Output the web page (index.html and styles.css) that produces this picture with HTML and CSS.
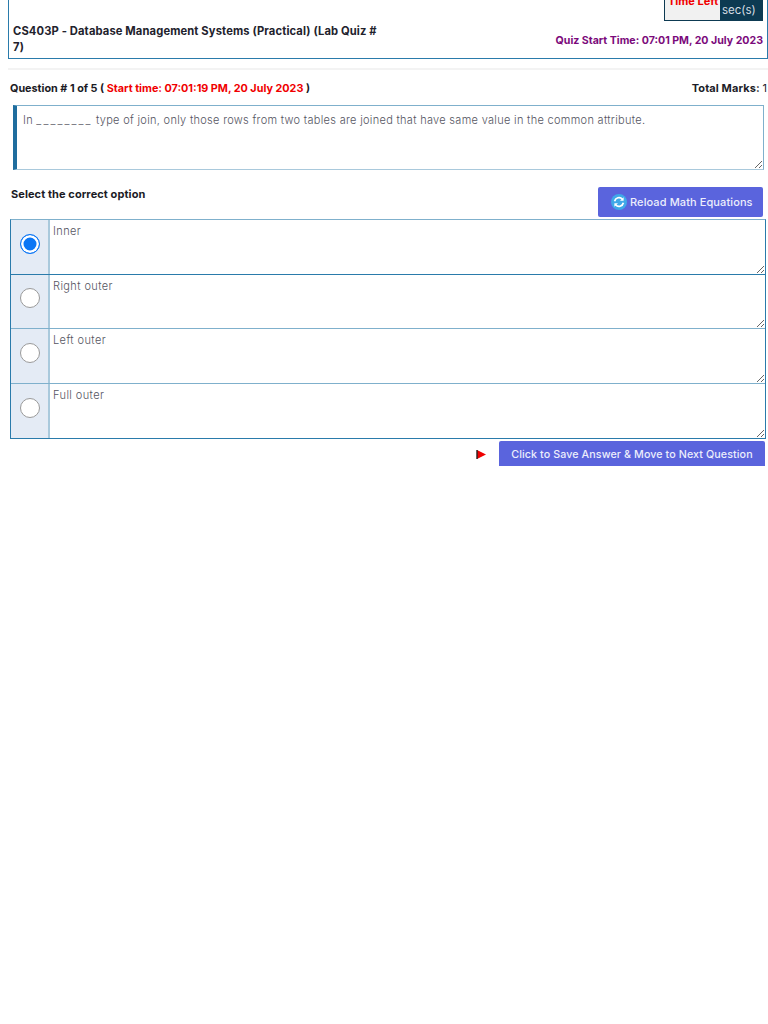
FILE: index.html
```html
<!DOCTYPE html>
<html lang="en">
<head>
<meta charset="utf-8">
<title>Lab Quiz</title>
<link rel="stylesheet" href="styles.css">
</head>
<body>
<div class="page">
  <header class="head">
    <div class="course">CS403P - Database Management Systems (Practical) (Lab Quiz # 7)</div>
    <div class="head-right">
      <div class="timer"><div class="timer-label">Time Left</div><div class="timer-unit">sec(s)</div></div>
      <div class="quiz-start">Quiz Start Time: 07:01 PM, 20 July 2023</div>
    </div>
  </header>
  <div class="rule"></div>
  <div class="q-row">
    <div class="q-title">Question # 1 of 5 ( <span class="red">Start time: 07:01:19 PM, 20 July 2023</span> )</div>
    <div class="marks">Total Marks: <span class="marks-val">1</span></div>
  </div>
  <div class="question">In <span class="blank">________</span> type of join, only those rows from two tables are joined that have same value in the common attribute.</div>
  <div class="select-row">
    <div class="select-label">Select the correct option</div>
    <button class="btn reload" type="button">
      <svg class="reload-icon" viewBox="0 0 16 16" width="16" height="16" aria-hidden="true">
        <circle cx="8" cy="8" r="8" fill="#3fa9e8"/>
        <path d="M3.6 7.2A4.5 4.5 0 0 1 11.4 5.2" fill="none" stroke="#fff" stroke-width="1.7"/>
        <path d="M12.6 3.2v3.6H9z" fill="#fff"/>
        <path d="M12.4 8.8A4.5 4.5 0 0 1 4.6 10.8" fill="none" stroke="#fff" stroke-width="1.7"/>
        <path d="M3.4 12.8V9.2H7z" fill="#fff"/>
      </svg>
      Reload Math Equations
    </button>
  </div>
  <div class="options">
    <div class="option">
      <div class="radio-cell"><span class="radio checked"></span></div>
      <textarea class="answer" readonly>Inner</textarea>
    </div>
    <div class="option">
      <div class="radio-cell"><span class="radio"></span></div>
      <textarea class="answer" readonly>Right outer</textarea>
    </div>
    <div class="option">
      <div class="radio-cell"><span class="radio"></span></div>
      <textarea class="answer" readonly>Left outer</textarea>
    </div>
    <div class="option">
      <div class="radio-cell"><span class="radio"></span></div>
      <textarea class="answer" readonly>Full outer</textarea>
    </div>
  </div>
  <div class="save-row">
    <svg class="arrow" viewBox="0 0 11 11" width="11" height="11" aria-hidden="true">
      <path d="M1 1l9 4.5-9 4.5z" fill="#f00000"/>
      <path d="M1 1v9" stroke="#222" stroke-width="1.4"/>
    </svg>
    <button class="btn save" type="button">Click to Save Answer &amp; Move to Next Question</button>
  </div>
</div>
</body>
</html>
```
FILE: styles.css
```css
* { box-sizing: border-box; }
html, body { margin: 0; background: #fff; }
body {
  font-family: "Inter", "Open Sans", "Liberation Sans", sans-serif;
  color: #1d1d28;
  font-size: 11px;
}
.page { height: 1024px; overflow: hidden; }

.head {
  margin-left: 8px;
  height: 59px;
  border: 1px solid #2a7bab;
  border-top: 0;
  display: flex;
  justify-content: space-between;
  align-items: flex-end;
  padding: 0 4px 3px 4px;
  overflow: hidden;
}
.course {
  width: 368px;
  font-weight: 700;
  font-size: 11.2px;
  line-height: 16px;
  letter-spacing: 0.12px;
  color: #22222c;
}
.head-right {
  align-self: flex-start;
  display: flex;
  flex-direction: column;
  align-items: flex-end;
  gap: 12px;
}
.timer {
  display: flex;
  width: 99px;
  height: 21px;
  border: 1px solid #0d3a52;
  border-top: 0;
  overflow: hidden;
}
.timer-label {
  width: 55px;
  background: #f1f1f1;
  color: #f00000;
  font-weight: 700;
  font-size: 11px;
  line-height: 2px;
  padding-left: 3px;
  white-space: nowrap;
}
.timer-unit {
  flex: 1;
  background: #0d3a52;
  color: #d5dde2;
  font-size: 11.5px;
  line-height: 20px;
  padding-left: 2px;
}
.quiz-start {
  font-weight: 700;
  font-size: 10.6px;
  line-height: 16px;
  color: #7b0a7b;
  white-space: nowrap;
}

.rule { height: 2px; margin: 9px 0 0 8px; background: #f3f3f3; }

.q-row {
  display: flex;
  justify-content: space-between;
  align-items: center;
  height: 16px;
  margin: 10px 0 0 10px;
  white-space: nowrap;
}
.q-title { font-weight: 700; font-size: 10.8px; color: #1b1b25; }
.red { color: #f00000; }
.marks { font-weight: 700; font-size: 11px; letter-spacing: 0.1px; margin-right: 1px; }
.marks-val { font-weight: 400; }

.question {
  width: 751px;
  height: 65px;
  margin: 9px 0 0 13px;
  padding: 7px 6px;
  border: 1px solid #7fb0cc;
  border-left: 4px solid #1f6d9e;
  border-bottom-color: #a9c9dc;
  font-size: 11px;
  font-weight: 300;
  letter-spacing: 0.3px;
  line-height: 15px;
  color: #55555f;
  background: #fff;
  overflow: auto;
  resize: both;
}
.blank { letter-spacing: 2.1px; }

.select-row {
  display: flex;
  justify-content: space-between;
  margin: 17px 5px 0 11px;
  height: 31px;
}
.select-label { font-weight: 700; font-size: 11px; letter-spacing: 0.08px; line-height: 14px; color: #1b1b25; }

.btn {
  border: 0;
  border-radius: 2px;
  background: #5a64dd;
  color: #eceefc;
  font-family: inherit;
  font-weight: 500;
  font-size: 11px;
  letter-spacing: 0.1px;
  white-space: nowrap;
}
.reload {
  width: 165px;
  height: 30px;
  display: flex;
  align-items: center;
  gap: 3px;
  padding: 0 0 0 13px;
}
.reload-icon { flex: none; }

.options {
  margin: 1px 2px 0 10px;
  border: 1px solid #2a7bab;
  border-top: 1px solid #7fb0cc;
}
.option {
  display: flex;
  height: 54.6px;
  border-bottom: 1px solid #7fb0cc;
}
.option:first-child { border-bottom-color: #2a7bab; }
.option:last-child { border-bottom: 0; }
.radio-cell {
  width: 39px;
  flex: none;
  background: #e4ebf5;
  border-right: 2px solid #a9c9dc;
  display: flex;
  align-items: center;
  justify-content: center;
  padding: 0 0 6px 1px;
}
.radio {
  width: 20px;
  height: 20px;
  border-radius: 50%;
  border: 1px solid #9a9a9a;
  background: #fff;
}
.radio.checked {
  border: 1.5px solid #0b76f5;
  background: #0b76f5;
  box-shadow: inset 0 0 0 2.5px #fff;
}
.answer {
  flex: 1;
  display: block;
  height: 100%;
  min-width: 0;
  padding: 4px 3px;
  border: 0;
  border-radius: 0;
  outline: 0;
  font-family: inherit;
  font-size: 11px;
  font-weight: 300;
  letter-spacing: 0.4px;
  line-height: 14px;
  color: #55555f;
  background: #fff;
}

.save-row {
  display: flex;
  justify-content: flex-end;
  align-items: center;
  gap: 12px;
  margin: 2px 3px 0 0;
  height: 25px;
}
.arrow { flex: none; margin-top: 1px; }
.save {
  width: 266px;
  height: 25px;
  padding: 1px 0 0;
  border-radius: 2px 2px 0 0;
  font-size: 10.7px;
}
```
